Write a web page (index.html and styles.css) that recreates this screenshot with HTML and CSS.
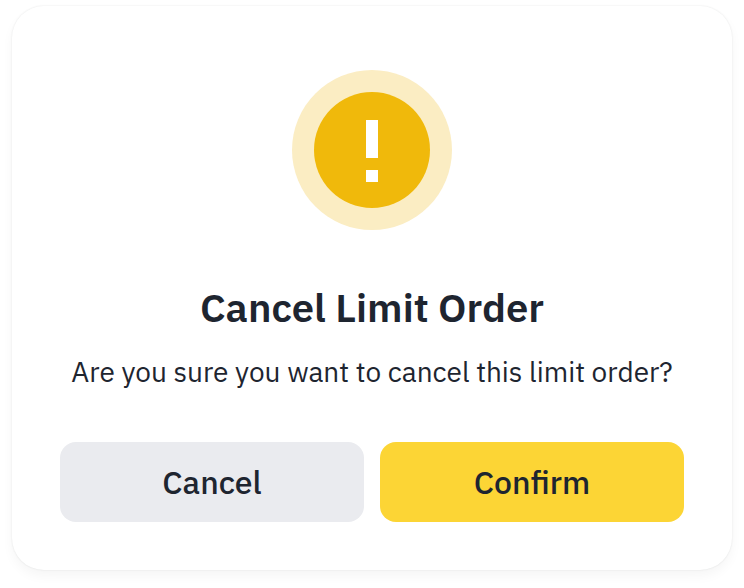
FILE: index.html
```html
<!DOCTYPE html>
<html lang="en">
<head>
  <meta charset="UTF-8" />
  <meta name="viewport" content="width=device-width, initial-scale=1.0"/>
  <title>Cancel Limit Order</title>
  <link rel="stylesheet" href="styles.css">
</head>
<body>
<div class="modal">
  <svg class="icon" viewBox="0 0 160 160">
    <circle cx="80" cy="80" r="80" fill="#fbedc3"/>
    <circle cx="80" cy="80" r="58" fill="#f0b90b"/>
    <path d="M74 50h12v38H74zM74 100h12v12H74z" fill="#fff"/>
  </svg>
  <h2>Cancel Limit Order</h2>
  <p>Are you sure you want to cancel this limit order?</p>
  <div class="buttons">
    <button type="button" class="cancel">Cancel</button>
    <button type="button" class="confirm">Confirm</button>
  </div>
</div>
</body>
</html>
```

FILE: styles.css
```css
* {
  box-sizing: border-box;
}
body {
  margin: 0;
  min-height: 588px;
  padding: 6px 12px;
  background: #fff;
  font-family: "IBM Plex Sans", Roboto, sans-serif;
  color: #1e2530;
}
.modal {
  height: 564px;
  padding: 64px 48px 48px;
  border-radius: 32px;
  background: #fff;
  box-shadow: 0 0 2px rgba(24,26,32,0.1), 0 6px 12px rgba(24,26,32,0.04);
  display: flex;
  flex-direction: column;
  align-items: center;
}
.icon {
  width: 160px;
  height: 160px;
}
h2 {
  margin: 49px 0 0;
  font-size: 40px;
  line-height: 56px;
  font-weight: 600;
  white-space: nowrap;
}
p {
  margin: 17px 0 0;
  font-size: 28px;
  line-height: 40px;
  white-space: nowrap;
}
.buttons {
  display: flex;
  gap: 16px;
  width: 624px;
  margin-top: auto;
}
button {
  flex: 1;
  height: 80px;
  border: none;
  border-radius: 16px;
  font-family: inherit;
  font-size: 32px;
  font-weight: 500;
  color: #1e2530;
  cursor: pointer;
}
.cancel {
  background: #eaebef;
}
.confirm {
  background: #fcd535;
}
```
